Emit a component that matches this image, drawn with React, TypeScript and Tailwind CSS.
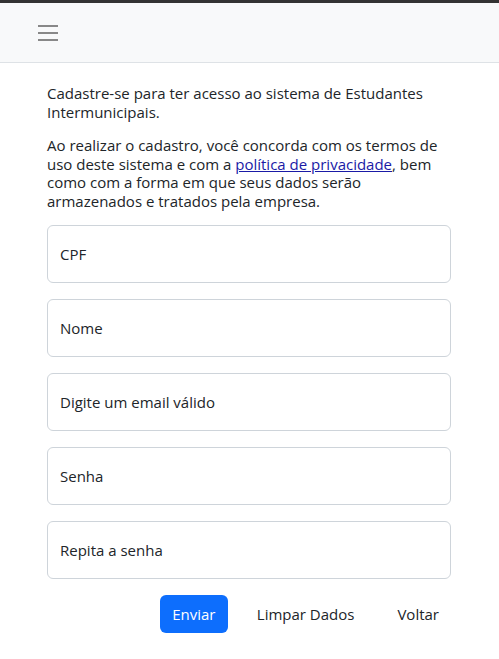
import { useState } from "react";

const fields = ["CPF", "Nome", "Digite um email válido", "Senha", "Repita a senha"];

export default function App() {
  const [values, setValues] = useState<Record<string, string>>({});

  return (
    <div className="min-h-screen bg-white text-[#212529] font-['Open_Sans',sans-serif]">
      <div className="h-[3px] bg-[#333]" />
      <nav className="h-[60px] bg-[#f8f9fa] border-b border-[#dee2e6] flex items-center pl-[38px]">
        <button className="flex flex-col gap-[5px] w-5">
          <span className="h-[2px] w-5 bg-[#888]" />
          <span className="h-[2px] w-5 bg-[#888]" />
          <span className="h-[2px] w-5 bg-[#888]" />
        </button>
      </nav>

      <main className="pl-[47px] pr-[48px] pt-[21px] pb-6 text-[15px] leading-[18.5px]">
        <p>Cadastre-se para ter acesso ao sistema de Estudantes Intermunicipais.</p>
        <p className="mt-[15px]">
          Ao realizar o cadastro, você concorda com os termos de uso deste sistema e com a{" "}
          <a href="#" className="text-[#1a1aa6] underline">
            política de privacidade
          </a>
          , bem como com a forma em que seus dados serão armazenados e tratados pela empresa.
        </p>

        <form className="mt-[15px] flex flex-col gap-4" onSubmit={(e) => e.preventDefault()}>
          {fields.map((f) => (
            <input
              key={f}
              type={f.startsWith("Senha") || f.startsWith("Repita") ? "password" : "text"}
              placeholder={f}
              value={values[f] ?? ""}
              onChange={(e) => setValues({ ...values, [f]: e.target.value })}
              className="h-[58px] w-full rounded-[6px] border border-[#ced4da] px-3 text-[15px] placeholder:text-[#212529] outline-none"
            />
          ))}

          <div className="flex justify-end">
            <button type="submit" className="h-[38px] w-[68px] rounded-[6px] bg-[#0d6efd] text-white">
              Enviar
            </button>
            <button type="button" onClick={() => setValues({})} className="ml-[17px] h-[38px] px-3">
              Limpar Dados
            </button>
            <button type="button" className="ml-[19px] h-[38px] px-3">
              Voltar
            </button>
          </div>
        </form>
      </main>
    </div>
  );
}
